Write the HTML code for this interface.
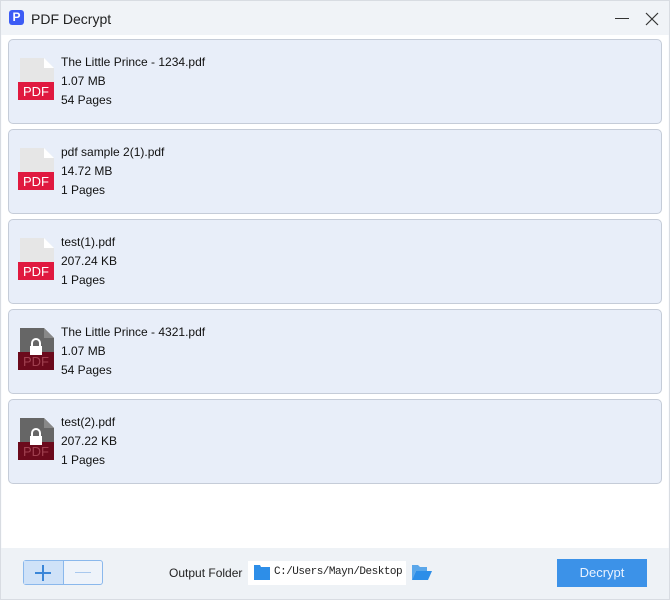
<!DOCTYPE html>
<html><head><style>
*{margin:0;padding:0;box-sizing:border-box}
body{width:670px;height:600px;background:#fff;font-family:"Liberation Sans",sans-serif;position:relative;overflow:hidden;font-size:12px;color:#111}
.win{position:absolute;left:0;top:0;width:670px;height:600px;border:1px solid #d8dce2;background:#fafbfd}
.title{position:absolute;left:0;top:0;width:668px;height:34px;background:#f0f3f7}
.logo{position:absolute;left:8px;top:9px;width:15px;height:15px;background:#3d5cf5;border-radius:3px;color:#fff;font-weight:bold;font-size:12px;text-align:center;line-height:15px}
.tt{position:absolute;left:30px;top:10px;font-size:14px;color:#222}
.card{position:absolute;left:7px;width:654px;height:85px;background:#e8eef9;border:1px solid #c5ccd8;border-radius:5px}
.ic{position:absolute;left:9px;top:18px;width:36px;height:44px}
.t{position:absolute;left:52px;font-size:12px;color:#111}
.bot{position:absolute;left:0;top:547px;width:668px;height:51px;background:#eef2f6}
</style></head><body>
<div class="win">
<div class="title"><div class="logo">P</div><div class="tt">PDF Decrypt</div>
<div style="position:absolute;left:614px;top:17px;width:14px;height:1px;background:#333"></div>
<svg style="position:absolute;left:644px;top:11px" width="14" height="14"><path d="M1 1L13 13M13 1L1 13" stroke="#333" stroke-width="1.2"/></svg>
</div>
<div style="position:absolute;left:1px;top:34px;width:666px;height:513px;background:#fff"></div>

<div class="card" style="top:38px">
<svg class="ic" viewBox="0 0 36 44"><path d="M2 0H26L36 10V26H2Z" fill="#e6e6e6"/><path d="M26 0V10H36Z" fill="#fff"/><rect x="0" y="24" width="36" height="18" fill="#e0193f"/><text x="18" y="38" fill="#fff" font-size="13" text-anchor="middle" font-family="Liberation Sans">PDF</text></svg>
<div class="t" style="top:15px">The Little Prince - 1234.pdf</div><div class="t" style="top:34px">1.07 MB</div><div class="t" style="top:53px">54 Pages</div></div>

<div class="card" style="top:128px">
<svg class="ic" viewBox="0 0 36 44"><path d="M2 0H26L36 10V26H2Z" fill="#e6e6e6"/><path d="M26 0V10H36Z" fill="#fff"/><rect x="0" y="24" width="36" height="18" fill="#e0193f"/><text x="18" y="38" fill="#fff" font-size="13" text-anchor="middle" font-family="Liberation Sans">PDF</text></svg>
<div class="t" style="top:15px">pdf sample 2(1).pdf</div><div class="t" style="top:34px">14.72 MB</div><div class="t" style="top:53px">1 Pages</div></div>

<div class="card" style="top:218px">
<svg class="ic" viewBox="0 0 36 44"><path d="M2 0H26L36 10V26H2Z" fill="#e6e6e6"/><path d="M26 0V10H36Z" fill="#fff"/><rect x="0" y="24" width="36" height="18" fill="#e0193f"/><text x="18" y="38" fill="#fff" font-size="13" text-anchor="middle" font-family="Liberation Sans">PDF</text></svg>
<div class="t" style="top:15px">test(1).pdf</div><div class="t" style="top:34px">207.24 KB</div><div class="t" style="top:53px">1 Pages</div></div>

<div class="card" style="top:308px">
<svg class="ic" viewBox="0 0 36 44"><path d="M2 0H26L36 10V26H2Z" fill="#666"/><path d="M26 0V10H36Z" fill="#888"/><rect x="0" y="24" width="36" height="18" fill="#6b0a1c"/><text x="18" y="38" fill="#a04050" font-size="13" text-anchor="middle" font-family="Liberation Sans">PDF</text><rect x="12" y="18" width="12" height="9" fill="#fff"/><path d="M14 18V15a4 4 0 0 1 8 0V18" stroke="#fff" stroke-width="2" fill="none"/></svg>
<div class="t" style="top:15px">The Little Prince - 4321.pdf</div><div class="t" style="top:34px">1.07 MB</div><div class="t" style="top:53px">54 Pages</div></div>

<div class="card" style="top:398px">
<svg class="ic" viewBox="0 0 36 44"><path d="M2 0H26L36 10V26H2Z" fill="#666"/><path d="M26 0V10H36Z" fill="#888"/><rect x="0" y="24" width="36" height="18" fill="#6b0a1c"/><text x="18" y="38" fill="#a04050" font-size="13" text-anchor="middle" font-family="Liberation Sans">PDF</text><rect x="12" y="18" width="12" height="9" fill="#fff"/><path d="M14 18V15a4 4 0 0 1 8 0V18" stroke="#fff" stroke-width="2" fill="none"/></svg>
<div class="t" style="top:15px">test(2).pdf</div><div class="t" style="top:34px">207.22 KB</div><div class="t" style="top:53px">1 Pages</div></div>

<div class="bot">
<div style="position:absolute;left:22px;top:12px;width:80px;height:25px;border:1px solid #8ab8ec;border-radius:3px;background:#eef3fa"></div>
<div style="position:absolute;left:23px;top:13px;width:39px;height:23px;background:#cfe2f8"></div>
<div style="position:absolute;left:62px;top:13px;width:1px;height:23px;background:#8ab8ec"></div>
<div style="position:absolute;left:34px;top:24px;width:16px;height:2px;background:#3a86d8"></div>
<div style="position:absolute;left:41px;top:17px;width:2px;height:16px;background:#3a86d8"></div>
<div style="position:absolute;left:74px;top:24px;width:16px;height:1px;background:#a8c8ee"></div>
<div style="position:absolute;left:168px;top:18px;font-size:12px;color:#222">Output Folder</div>
<div style="position:absolute;left:247px;top:13px;width:158px;height:24px;background:#fff"></div>
<svg style="position:absolute;left:253px;top:15px" width="16" height="18"><path d="M0 2H6L7 4H16V17H0Z" fill="#2d8ee8"/></svg>
<div style="position:absolute;left:273px;top:18px;font-family:'Liberation Mono',monospace;font-size:11px;color:#222;letter-spacing:-0.5px">C:/Users/Mayn/Desktop</div>
<svg style="position:absolute;left:410px;top:13px" width="22" height="22"><path d="M1 4H7L9 6H16V10H5L1 19Z" fill="#5aa7ea"/><path d="M5 10H21L17 19H1Z" fill="#2d8ee8"/></svg>
<div style="position:absolute;left:556px;top:11px;width:90px;height:28px;background:#3c92e8;color:#eaf3ff;font-size:13px;text-align:center;line-height:28px">Decrypt</div>
</div>
</div>
</body></html>
